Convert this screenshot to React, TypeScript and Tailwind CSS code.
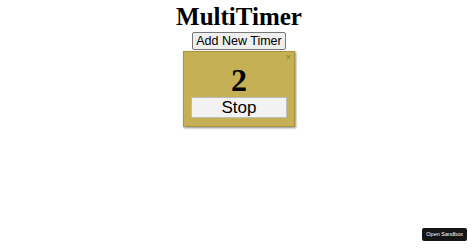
import { useState } from "react";

export default function App() {
  const [timers] = useState([2]);

  return (
    <div className="relative h-[248px] w-[474px] overflow-hidden bg-white">
      <div className="flex flex-col items-center pl-[4px] pt-[4px]">
        <h1 className="font-['Liberation_Serif',serif] text-[25px] font-bold leading-[26px] text-black">
          MultiTimer
        </h1>
        <button className="mt-[2px] h-[18px] rounded-[2px] border border-[#767676] bg-[#efefef] px-[3px] font-['Liberation_Sans',Arial,sans-serif] text-[12.5px] leading-[16px] text-black">
          Add New Timer
        </button>
        {timers.map((t, i) => (
          <div
            key={i}
            className="relative mt-[1px] flex h-[76px] w-[112px] flex-col items-center border border-[#a8963f] bg-[#c6b055] shadow-[1px_1px_2px_rgba(0,0,0,0.45)]"
          >
            <span className="absolute right-[3px] top-[0px] font-['Liberation_Sans',sans-serif] text-[9px] leading-[10px] text-[#8a7b3a]">
              ×
            </span>
            <div className="mt-[13px] font-['Liberation_Serif',serif] text-[32px] font-bold leading-[30px] text-black">
              {t}
            </div>
            <button className="mt-[2px] h-[21px] w-[96px] border border-[#bdbdbd] bg-[#f2f2f2] font-['Liberation_Sans',Arial,sans-serif] text-[17px] leading-[19px] text-black">
              Stop
            </button>
          </div>
        ))}
      </div>
      <div className="absolute bottom-[7px] right-[7px] flex h-[13px] items-center rounded-[2px] bg-[#151515] px-[4px] font-['Liberation_Sans',sans-serif] text-[5.5px] text-white">
        Open Sandbox
      </div>
    </div>
  );
}
